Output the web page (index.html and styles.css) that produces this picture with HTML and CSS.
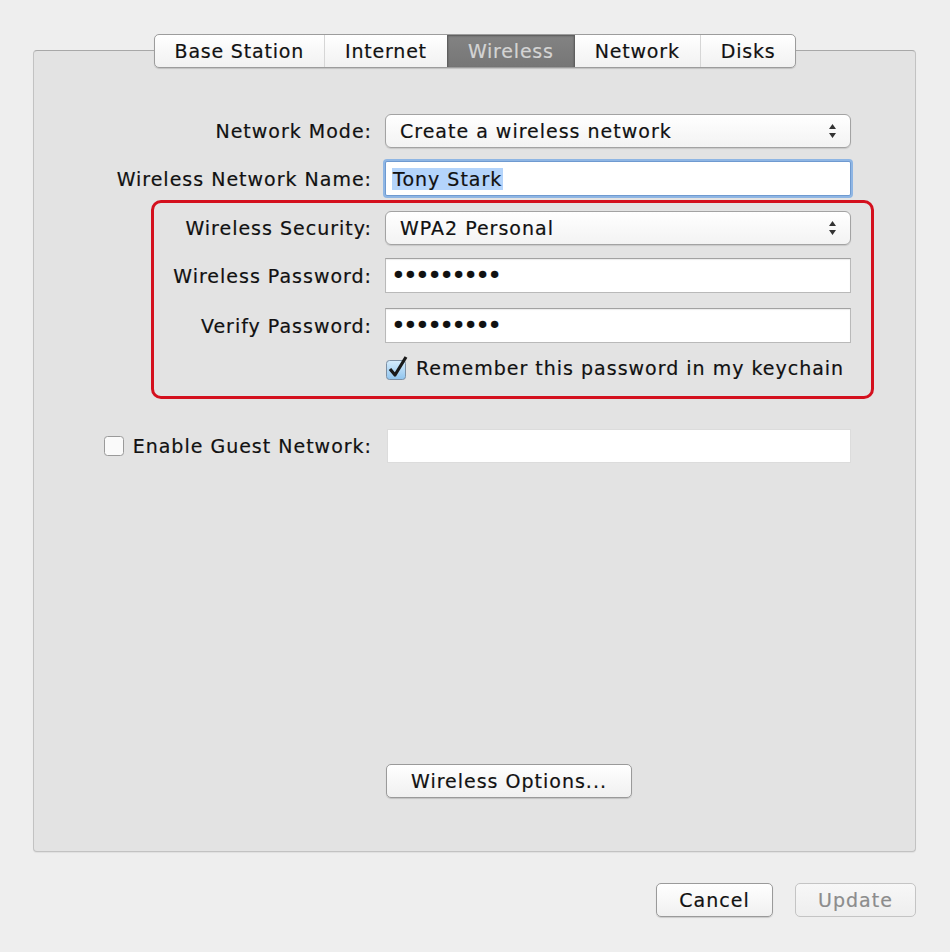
FILE: index.html
```html
<!DOCTYPE html>
<html lang="en">
<head>
  <meta charset="UTF-8">
  <title>Wireless</title>
  <link rel="stylesheet" href="styles.css">
</head>
<body>
  <div class="tabs">
    <div class="tab">Base Station</div>
    <div class="tab">Internet</div>
    <div class="tab selected">Wireless</div>
    <div class="tab">Network</div>
    <div class="tab">Disks</div>
  </div>

  <div class="panel">
    <div class="form">
      <div class="row">
        <label class="label">Network Mode:</label>
        <div class="popup">
          <span>Create a wireless network</span>
          <svg class="arrows" width="9" height="16" viewBox="0 0 9 16"><path d="M4.5 1 L8 6 H1 Z M4.5 15 L8 10 H1 Z" fill="#333"/></svg>
        </div>
      </div>

      <div class="row">
        <label class="label">Wireless Network Name:</label>
        <div class="field focused"><span class="selection">Tony Stark</span></div>
      </div>

      <!-- security settings, outlined -->
      <div class="group">
        <div class="row">
          <label class="label">Wireless Security:</label>
          <div class="popup">
            <span>WPA2 Personal</span>
            <svg class="arrows" width="9" height="16" viewBox="0 0 9 16"><path d="M4.5 1 L8 6 H1 Z M4.5 15 L8 10 H1 Z" fill="#333"/></svg>
          </div>
        </div>
        <div class="row">
          <label class="label">Wireless Password:</label>
          <div class="field"><span class="dots">•••••••••</span></div>
        </div>
        <div class="row verify">
          <label class="label">Verify Password:</label>
          <div class="field"><span class="dots">•••••••••</span></div>
        </div>
        <div class="row check-row">
          <span></span>
          <div class="check">
            <svg class="box" width="26" height="26" viewBox="0 0 26 26">
              <defs>
                <linearGradient id="cb" x1="0" y1="0" x2="0" y2="1">
                  <stop offset="0" stop-color="#d6ecfc"/>
                  <stop offset="1" stop-color="#8fc4ee"/>
                </linearGradient>
              </defs>
              <rect x="1.5" y="5.5" width="19" height="19" rx="3" fill="url(#cb)" stroke="#7d8fa3"/>
              <path d="M5 14 L10 20 L21 2" fill="none" stroke="#1a1a1a" stroke-width="3.2" stroke-linejoin="round"/>
            </svg>
            <span>Remember this password in my keychain</span>
          </div>
        </div>
        <div class="outline"></div>
      </div>

      <div class="row guest-row">
        <label class="label guest">
          <svg class="box" width="22" height="22" viewBox="0 0 22 22"><rect x="1.5" y="1.5" width="19" height="19" rx="3" fill="#fafafa" stroke="#9a9a9a"/></svg>
          Enable Guest Network:
        </label>
        <div class="field blank"></div>
      </div>
    </div>

    <button class="btn options">Wireless Options...</button>
  </div>

  <div class="footer">
    <button class="btn cancel">Cancel</button>
    <button class="btn update" disabled>Update</button>
  </div>
</body>
</html>
```

FILE: styles.css
```css
* {
  margin: 0;
  padding: 0;
  box-sizing: border-box;
}

body {
  font-family: "DejaVu Sans", sans-serif;
  background: #eeeeee;
  color: #111111;
  -webkit-text-stroke: 0.2px currentColor;
  width: 950px;
  height: 952px;
  overflow: hidden;
}

/* segmented tab control */
.tabs {
  position: relative;
  z-index: 1;
  display: flex;
  width: max-content;
  height: 34px;
  margin: 34px auto 0;
  background: linear-gradient(#ffffff, #f1f1f1);
  border: 1px solid #9c9c9c;
  border-radius: 5px;
  box-shadow: 0 1px 1px rgba(0, 0, 0, 0.15);
  overflow: hidden;
}

.tab {
  display: flex;
  align-items: center;
  padding: 0 20px;
  font-size: 19px;
  letter-spacing: 0.8px;
  border-left: 1px solid #d6d6d6;
}

.tab:first-child {
  border-left: none;
}

.tab.selected {
  background: linear-gradient(#838383, #767676);
  color: #d4d4d4;
  border-left: 1px solid #5f5f5f;
  border-right: 1px solid #5f5f5f;
  box-shadow: inset 0 1px 2px rgba(0, 0, 0, 0.35);
}

.tab.selected + .tab {
  border-left: none;
}

/* grouped box */
.panel {
  display: flex;
  flex-direction: column;
  align-items: flex-start;
  width: 883px;
  height: 802px;
  margin: -18px 0 0 33px;
  padding: 62px 0 53px;
  background: #e3e3e3;
  border: 1px solid #c2c2c2;
  border-top-color: #a8a8a8;
  border-radius: 4px;
  box-shadow: 0 1px 1px rgba(0, 0, 0, 0.06);
}

.form {
  display: flex;
  flex-direction: column;
  gap: 13px;
  width: 817px;
}

.row {
  display: grid;
  grid-template-columns: 338px 466px;
  column-gap: 13px;
  align-items: center;
  height: 35px;
}

.label {
  text-align: right;
  font-size: 19px;
  letter-spacing: 1px;
}

.popup {
  display: flex;
  align-items: center;
  justify-content: space-between;
  height: 34px;
  padding: 0 13px 0 14px;
  font-size: 19px;
  letter-spacing: 1px;
  background: linear-gradient(#ffffff, #f3f3f3);
  border: 1px solid #a3a3a3;
  border-radius: 6px;
  box-shadow: 0 1px 1px rgba(0, 0, 0, 0.12);
}

.arrows {
  flex: none;
}

.field {
  display: flex;
  align-items: center;
  height: 35px;
  padding: 0 6px;
  font-size: 19px;
  letter-spacing: 1px;
  background: #ffffff;
  border: 1px solid #b9b9b9;
  border-top-color: #a2a2a2;
  box-shadow: inset 0 1px 1px rgba(0, 0, 0, 0.08);
}

.field.focused {
  border: 1px solid #6f9ad0;
  box-shadow: 0 0 0 2px #8fb6e4;
  border-radius: 2px;
}

.selection {
  background: #b4d4fb;
  padding: 0 1px;
}

.dots {
  font-size: 25px;
  letter-spacing: -2.7px;
  line-height: 1;
  margin-left: -1px;
}

/* security group with its red outline */
.group {
  position: relative;
  display: flex;
  flex-direction: column;
  gap: 13px;
  margin-top: 1px;
}

.verify {
  margin-top: 2px;
}

.outline {
  position: absolute;
  top: -10px;
  bottom: -18px;
  left: 117px;
  right: -23px;
  border: 3px solid #d4101e;
  border-radius: 10px;
  pointer-events: none;
}

.check-row {
  height: 26px;
  margin-top: -1px;
}

.check {
  display: flex;
  align-items: center;
  gap: 5px;
  font-size: 19px;
  letter-spacing: 1px;
}

.box {
  flex: none;
}

.guest-row {
  margin-top: 35px;
  height: 34px;
}

.guest {
  display: flex;
  align-items: center;
  justify-content: flex-end;
  gap: 8px;
}

.field.blank {
  height: 34px;
  margin-left: 2px;
  border-color: #dcdcdc;
  box-shadow: none;
}

/* push buttons */
.btn {
  font-family: inherit;
  font-size: 19px;
  letter-spacing: 1px;
  color: #111111;
  height: 34px;
  background: linear-gradient(#ffffff, #f0f0f0);
  border: 1px solid #9a9a9a;
  border-radius: 5px;
  box-shadow: 0 1px 1px rgba(0, 0, 0, 0.15);
}

.options {
  width: 246px;
  margin: auto 0 0 352px;
}

.footer {
  display: flex;
  justify-content: flex-end;
  gap: 22px;
  width: 916px;
  margin-top: 31px;
}

.cancel {
  width: 117px;
}

.update {
  width: 121px;
  color: #8c8c8c;
  border-color: #c4c4c4;
  background: linear-gradient(#f7f7f7, #eeeeee);
  box-shadow: none;
}
```
